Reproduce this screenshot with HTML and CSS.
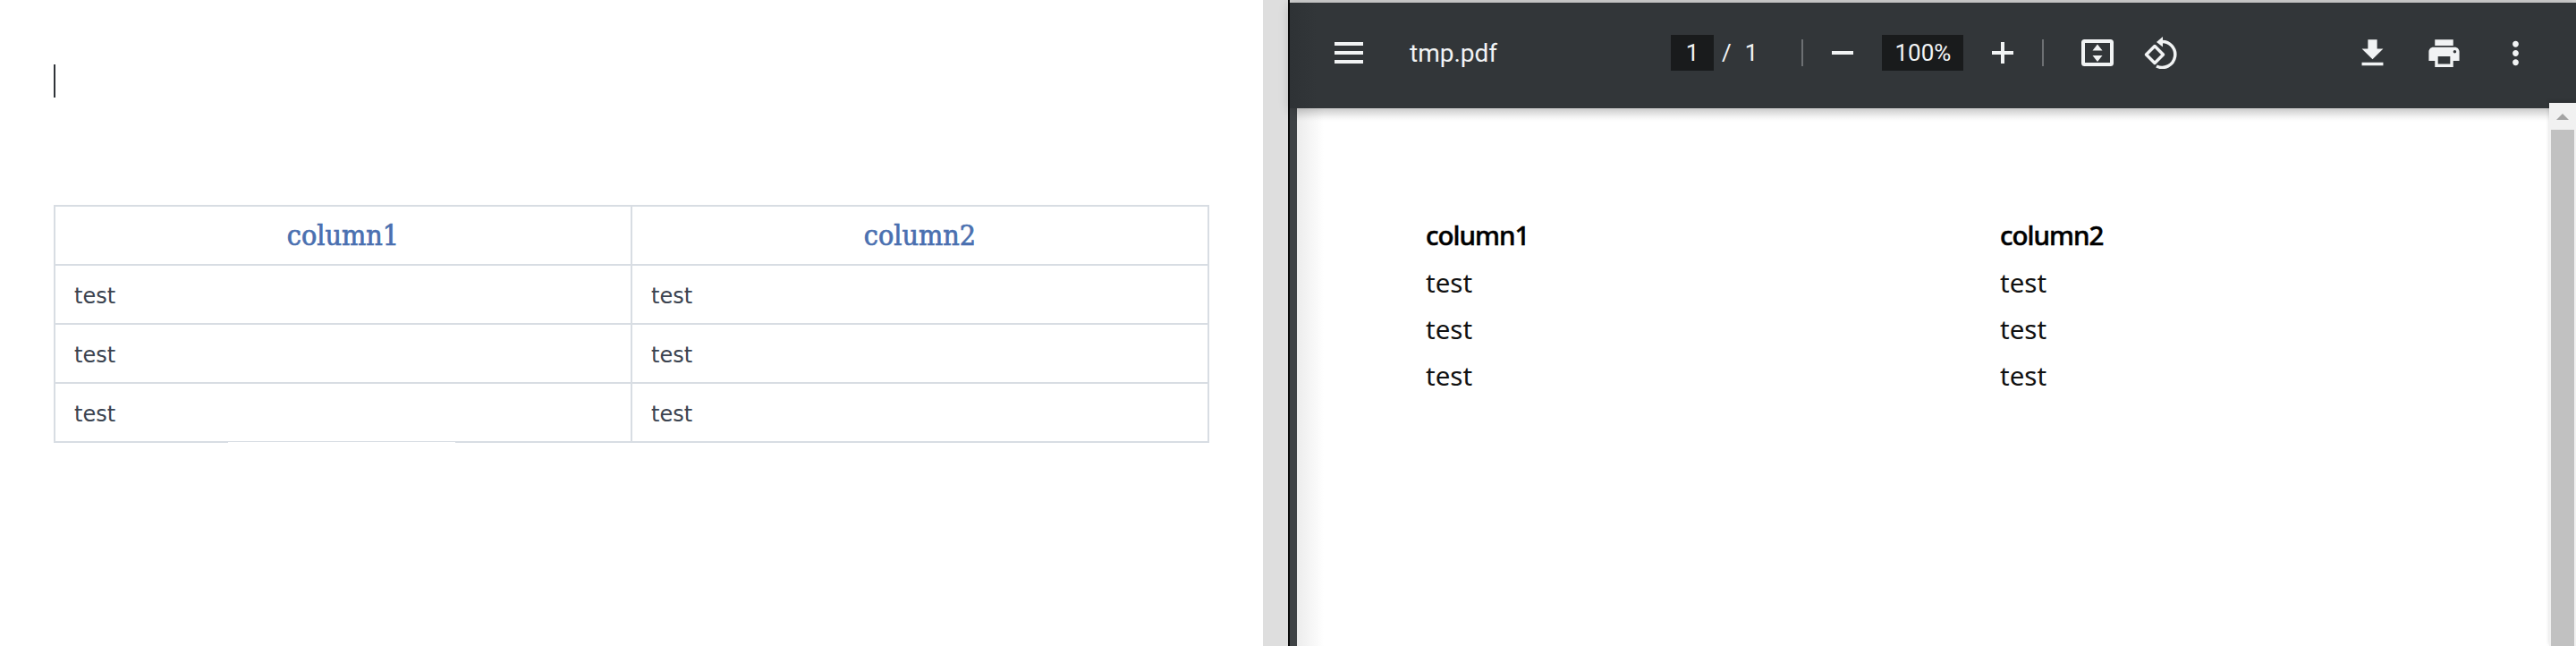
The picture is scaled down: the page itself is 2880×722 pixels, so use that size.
FILE: index.html
```html
<!DOCTYPE html>
<html lang="en">
<head>
<meta charset="utf-8">
<title>tmp.pdf</title>
<link rel="stylesheet" href="styles.css">
</head>
<body>
<main class="editor">
  <div class="caret"></div>
  <div class="table-wrap">
    <table class="doc-table">
      <thead>
        <tr><th>column1</th><th>column2</th></tr>
      </thead>
      <tbody>
        <tr><td>test</td><td>test</td></tr>
        <tr><td>test</td><td>test</td></tr>
        <tr><td>test</td><td>test</td></tr>
      </tbody>
    </table>
    <div class="notch"></div>
  </div>
</main>
<div class="gutter"></div>
<section class="viewer">
  <header class="toolbar">
    <div class="menu-icon"><span></span><span></span><span></span></div>
    <div class="title">tmp.pdf</div>
    <div class="page-box">1</div>
    <span class="slash">/</span>
    <span class="total">1</span>
    <div class="sep sep-a"></div>
    <div class="minus"></div>
    <div class="zoom-box">100%</div>
    <svg class="plus" width="24" height="24" viewBox="0 0 24 24"><path d="M10 0h4v10h10v4H14v10h-4V14H0v-4h10z"/></svg>
    <div class="sep sep-b"></div>
    <svg class="fit" width="36" height="30" viewBox="0 0 36 30"><rect x="2" y="2" width="32" height="26" rx="1.5" fill="none" stroke="#f1f3f4" stroke-width="4"/><path d="M18 5.500l5.500 7h-11zM18 25l-5.500-7h11z" fill="#f1f3f4"/></svg>
    <svg class="rotate" width="38" height="36" viewBox="0 0 38 36"><path d="M12 10.500 21.500 20 12 29.500 2.500 20z" fill="none" stroke="#f1f3f4" stroke-width="3.500" stroke-linejoin="round"/><path d="M19 5.500A14.500 14.500 0 1 1 14 33" fill="none" stroke="#f1f3f4" stroke-width="3.500"/><path d="M21 0v11.500l-7-5.500z" fill="#f1f3f4"/></svg>
    <svg class="download" width="41" height="41" viewBox="0 0 24 24"><path d="M19 9h-4V3H9v6H5l7 7 7-7zM5 18v2h14v-2H5z"/></svg>
    <svg class="print" width="41" height="41" viewBox="0 0 24 24"><path d="M19 8H5c-1.660 0-3 1.340-3 3v6h4v4h12v-4h4v-6c0-1.660-1.340-3-3-3zm-3 11H8v-5h8v5zm3-7c-.55 0-1-.45-1-1s.45-1 1-1 1 .45 1 1-.45 1-1 1zm-1-9H6v4h12V3z"/></svg>
    <svg class="more" width="41" height="41" viewBox="0 0 24 24"><path d="M12 8c1.100 0 2-.9 2-2s-.9-2-2-2-2 .9-2 2 .9 2 2 2zm0 2c-1.100 0-2 .9-2 2s.9 2 2 2 2-.9 2-2-.9-2-2-2zm0 6c-1.100 0-2 .9-2 2s.9 2 2 2 2-.9 2-2-.9-2-2-2z"/></svg>
  </header>
  <div class="stage">
    <article class="pdf-page">
      <div class="pdf-grid">
        <b>column1</b><b>column2</b>
        <span>test</span><span>test</span>
        <span>test</span><span>test</span>
        <span>test</span><span>test</span>
      </div>
    </article>
  </div>
  <div class="scrollbar">
    <div class="arrow"></div>
    <div class="thumb"></div>
  </div>
</section>
</body>
</html>
```
FILE: styles.css
```css
html, body { margin: 0; height: 100%; overflow: hidden; background: #fff; }
body { display: flex; width: 2880px; height: 722px; }

/* left editor */
.editor { width: 1412px; padding: 72px 0 0 60px; box-sizing: border-box; }
.caret { width: 2px; height: 37px; background: #2f3338; }
.table-wrap { position: relative; width: 1292px; margin-top: 120px; }
.doc-table { width: 1292px; border-collapse: collapse; table-layout: fixed; }
.doc-table th, .doc-table td { border: 2px solid #d8dde3; height: 66px; box-sizing: border-box; padding: 0; }
.doc-table th { font: 400 32px "DejaVu Serif Condensed", "DejaVu Serif", serif; font-stretch: condensed; color: #4a70b0; text-align: center; -webkit-text-stroke: .7px #4a70b0; }
.doc-table td { font: 400 24px "DejaVu Sans", sans-serif; color: #3b4350; padding: 3px 0 0 21px; }
.notch { position: absolute; left: 195px; bottom: 0; width: 254px; height: 1px; background: #fff; }

.gutter { width: 28px; background: #dedede; }

/* pdf viewer */
.viewer { position: relative; width: 1440px; box-sizing: border-box; border-left: 2px solid #0a0a0a; display: flex; flex-direction: column; background: #3e4245; padding-top: 3px; }
.viewer::before { content: ""; position: absolute; left: 0; right: 0; top: 0; height: 3px; background: #cfcfcf; }
.toolbar { position: relative; z-index: 1; height: 118px; box-sizing: border-box; padding-bottom: 6px; flex: none; display: flex; align-items: center; background: linear-gradient(90deg, #2e3235, #323639 30px); color: #f1f3f4; font-family: Roboto, sans-serif; font-size: 26px; fill: #f1f3f4; box-shadow: 0 2px 12px rgba(0,0,0,.2); }
.menu-icon { margin-left: 50px; width: 32px; display: flex; flex-direction: column; gap: 6px; }
.menu-icon span { height: 4px; background: #f1f3f4; }
.title { margin-left: 52px; width: 292px; font-size: 28px; }
.page-box, .zoom-box { height: 40px; line-height: 40px; background: #191b1c; text-align: center; }
.page-box { width: 48px; }
.slash { margin-left: 9px; }
.total { margin-left: 15px; }
.sep { width: 2px; height: 30px; background: #6d7073; }
.sep-a { margin-left: 49px; }
.minus { margin-left: 32px; width: 24px; height: 4px; background: #f1f3f4; }
.zoom-box { margin-left: 32px; width: 91px; }
.plus { margin-left: 32px; }
.sep-b { margin-left: 32px; }
.fit { margin-left: 42px; }
.rotate { margin-left: 34px; }
.download { margin-left: 197px; }
.print { margin-left: 39px; }
.more { margin-left: 39px; }

.stage { flex: 1; padding-left: 8px; min-height: 0; }
.pdf-page { height: 100%; box-sizing: border-box; padding: 117px 0 0 144px; background: linear-gradient(180deg, rgba(0,0,0,.1), transparent 14px), linear-gradient(90deg, #ececec, #fff 30px); }
.pdf-grid { display: grid; grid-template-columns: 642px 642px; font: 400 29.500px/52px "Noto Sans", sans-serif; color: #111; }
.pdf-grid b { margin: -1px 0 1px; font-weight: 500; font-size: 29.500px; letter-spacing: -1px; color: #000; -webkit-text-stroke: .5px #000; }

.scrollbar { position: absolute; z-index: 2; right: 0; top: 115px; bottom: 0; width: 30px; background: #f1f1f1; display: flex; flex-direction: column; align-items: center; box-shadow: 0 -2px 4px rgba(0,0,0,.15); }
.arrow { margin-top: 12px; width: 0; height: 0; border-left: 7px solid transparent; border-right: 7px solid transparent; border-bottom: 7px solid #a3a3a3; }
.thumb { margin-top: 11px; flex: 1; width: 26px; background: #c1c1c1; }
```
